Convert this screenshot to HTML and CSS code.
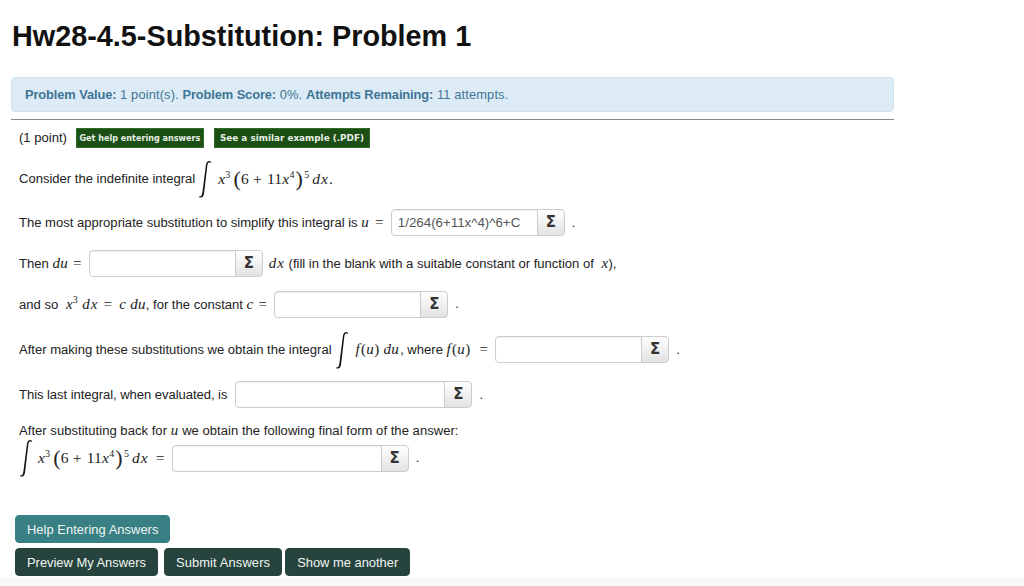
FILE: index.html
```html
<!DOCTYPE html>
<html lang="en">
<head>
<meta charset="utf-8">
<title>Hw28-4.5-Substitution: Problem 1</title>
<link rel="stylesheet" href="styles.css">
</head>
<body>
<main class="page">
  <h1 class="title">Hw28-4.5-Substitution: Problem 1</h1>
  <div class="alert"><b>Problem Value:</b> 1 point(s). <b>Problem Score:</b> 0%. <b>Attempts Remaining:</b> 11 attempts.</div>
  <section class="problem">
    <div class="row r-head">
      <span>(1 point)</span>
      <a class="tag tag-small">Get help entering answers</a>
      <a class="tag">See a similar example (.PDF)</a>
    </div>
    <div class="row r-int1">
      <span>Consider the indefinite integral</span>
      <svg class="integral" viewBox="0 0 14 38"><path d="M13.2 2.4C12.4.9 9.2-.2 8 4.6L4.4 32.6C4 35.4 3.2 37 1.2 36.2L.9 36.9C3.6 38.6 5.6 37 6.1 33L9.2 6.4C9.7 2.2 11 1.4 12.9 2.9Z" fill="#111"/></svg>
      <span class="math m-int"><i>x</i><sup>3</sup><span class="paren p-open">(</span>6<span class="plus">+</span>11<i>x</i><sup class="sup4">4</sup><span class="paren">)</span><sup class="sup5">5</sup><i class="wide">dx</i>.</span>
    </div>
    <div class="row r-sub">
      <span>The most appropriate substitution to simplify this integral is <i class="math">u</i><span class="math rel">=</span></span>
      <span class="answer w146"><span class="field f-filled">1/264(6+11x^4)^6+C</span><span class="sigma">Σ</span></span>
      <span class="dot">.</span>
    </div>
    <div class="row r-du">
      <span>Then <i class="math">du</i><span class="math rel">=</span></span>
      <span class="answer w146"><span class="field"></span><span class="sigma">Σ</span></span>
      <span class="after"><i class="math wide">dx</i> (fill in the blank with a suitable constant or function of <i class="math">&nbsp;x</i>),</span>
    </div>
    <div class="row r-c">
      <span>and so <span class="math">&nbsp;<i>x</i><sup>3</sup> <i class="wide">dx</i><span class="rel rel-both">=</span><i>c du</i></span>, for the constant <i class="math">c</i><span class="math rel">=</span></span>
      <span class="answer w146"><span class="field"></span><span class="sigma">Σ</span></span>
      <span class="dot">.</span>
    </div>
    <div class="row r-fu">
      <span>After making these substitutions we obtain the integral</span>
      <svg class="integral" viewBox="0 0 14 38"><path d="M13.2 2.4C12.4.9 9.2-.2 8 4.6L4.4 32.6C4 35.4 3.2 37 1.2 36.2L.9 36.9C3.6 38.6 5.6 37 6.1 33L9.2 6.4C9.7 2.2 11 1.4 12.9 2.9Z" fill="#111"/></svg>
      <span class="m-fu"><span class="math"><i class="f">f</i>(<i>u</i>) <i>du</i></span><span class="comma">,</span> where <span class="math"><i class="f">f</i>(<i>u</i>)<span class="rel">=</span></span></span>
      <span class="answer w146"><span class="field"></span><span class="sigma">Σ</span></span>
      <span class="dot">.</span>
    </div>
    <div class="row r-last">
      <span>This last integral, when evaluated, is</span>
      <span class="answer w209"><span class="field"></span><span class="sigma">Σ</span></span>
      <span class="dot">.</span>
    </div>
    <div class="row r-back">
      <span>After substituting back for <i class="math">u</i> we obtain the following final form of the answer:</span>
    </div>
    <div class="row r-final">
      <svg class="integral" viewBox="0 0 14 38"><path d="M13.2 2.4C12.4.9 9.2-.2 8 4.6L4.4 32.6C4 35.4 3.2 37 1.2 36.2L.9 36.9C3.6 38.6 5.6 37 6.1 33L9.2 6.4C9.7 2.2 11 1.4 12.9 2.9Z" fill="#111"/></svg>
      <span class="math m-int"><i>x</i><sup>3</sup><span class="paren p-open">(</span>6<span class="plus">+</span>11<i>x</i><sup class="sup4">4</sup><span class="paren">)</span><sup class="sup5">5</sup><i class="wide">dx</i><span class="rel">=</span></span>
      <span class="answer w209"><span class="field"></span><span class="sigma">Σ</span></span>
      <span class="dot">.</span>
    </div>
  </section>
  <div class="actions a-help">
    <button class="btn btn-help">Help Entering Answers</button>
  </div>
  <div class="actions a-main">
    <button class="btn">Preview My Answers</button>
    <button class="btn b-submit">Submit Answers</button>
    <button class="btn">Show me another</button>
  </div>
</main>
<div class="strip"></div>
</body>
</html>
```
FILE: styles.css
```css
html, body { margin: 0; padding: 0; }
body {
  width: 1024px;
  height: 586px;
  overflow: hidden;
  background: #fff;
  color: #222;
  font-family: "Liberation Sans", Arial, sans-serif;
  font-size: 13.05px;
  line-height: 18px;
  position: relative;
}
.page { padding: 0 130px 0 11px; }
.title {
  margin: 0;
  padding: 18px 0 0 1px;
  height: 77px;
  box-sizing: border-box;
  font-size: 28.8px;
  line-height: 36px;
  font-weight: 700;
  color: #111;
}
.alert {
  height: 35px;
  box-sizing: border-box;
  padding: 8px 13px;
  background: #dcebf5;
  border: 1px solid #cfe2ee;
  border-radius: 4px;
  color: #3f7596;
  font-size: 12.85px;
  letter-spacing: .14px;
}
.alert b { letter-spacing: -.1px; }
.problem {
  margin-top: 7px;
  border-top: 1px solid #8a8a8a;
  padding-left: 8px;
}
.row { display: flex; align-items: center; white-space: pre-wrap; }
.math { font-family: "Liberation Serif", "Times New Roman", serif; font-size: 15px; letter-spacing: .3px; }
sup { font-size: 10px; line-height: 0; }
.m-int { font-size: 15.5px; margin-left: 6px; letter-spacing: .2px; }
.paren { font-size: 22px; line-height: 0; vertical-align: -2px; font-weight: 400; }
.p-open { margin-left: 3px; }
.plus { margin: 0 5px 0 4px; }
.sup4 { margin-right: 1px; }
.sup5 { margin: 0 3px 0 1px; }
.wide { letter-spacing: 1px; }
.f { margin-right: 1px; }
.rel { margin-left: 5px; }
.r-sub .rel { margin-left: 6px; }
.r-fu .rel { margin-left: 9px; }
.r-final .rel { margin-left: 7px; }
.rel-both { margin-right: 7px; }
.comma { margin-left: 1px; }
.integral { width: 14px; height: 38px; margin-left: 3px; flex: none; }
.r-head { height: 35px; }
.tag {
  box-sizing: border-box;
  height: 20px;
  background: #1b4f14;
  border: 1px solid #2f6e27;
  color: #e8f0e6;
  font-family: "DejaVu Sans", sans-serif;
  font-weight: 700;
  font-size: 8.85px;
  line-height: 18px;
  padding: 0 5px;
}
.tag-small { font-size: 8.1px; margin-left: 9px; margin-right: 10px; padding: 0 2.5px; white-space: nowrap; }
.r-int1 { height: 48px; }
.r-sub { height: 39px; }
.r-du { height: 43px; }
.r-c { height: 38px; }
.r-fu { height: 53px; }
.r-last { height: 37px; letter-spacing: -.05px; }
.r-last .answer { margin-left: 8px; }
.r-last .field { width: 209px; }
.r-back { height: 35px; letter-spacing: .03px; }
.r-final { height: 20px; }
.r-final .integral { margin-left: 0; }
.r-final .m-int { margin-left: 5px; }
.answer {
  display: inline-flex;
  height: 27px;
  margin-left: 7px;
  flex: none;
}
.w146 .field { width: 147px; }
.w209 .field { width: 210px; }
.field {
  box-sizing: border-box;
  height: 27px;
  border: 1px solid #ccc;
  border-radius: 4px 0 0 4px;
  box-shadow: inset 0 1px 1px rgba(0,0,0,.075);
  padding: 4px 6px;
  color: #555;
  font-size: 13.3px;
  background: #fff;
}
.sigma {
  box-sizing: border-box;
  width: 28px;
  height: 27px;
  margin-left: -1px;
  border: 1px solid #ccc;
  border-radius: 0 4px 4px 0;
  background: linear-gradient(#fff, #e2e2e2);
  text-align: center;
  font-weight: 700;
  font-size: 15px;
  line-height: 25px;
  font-family: "DejaVu Sans", sans-serif;
  color: #333;
}
.dot { margin-left: 7px; }
.after { margin-left: 6px; }
.m-fu { margin-left: 7px; }
.actions { display: flex; gap: 3px; padding-left: 4px; }
.a-help { margin-top: 47px; }
.a-main { margin-top: 5px; }
.btn {
  height: 28px;
  box-sizing: border-box;
  border: 1px solid #26443d;
  border-radius: 4px;
  background: #26443d;
  color: #f0f4f2;
  font-family: "Liberation Sans", Arial, sans-serif;
  font-size: 12.9px;
  padding: 0 11px;
}
.btn-help { background: #388084; border-color: #388084; letter-spacing: .05px; }
.b-submit { margin-left: 3px; letter-spacing: .13px; }
.strip { position: absolute; left: 0; right: 0; bottom: 0; height: 9px; background: #f8f8f8; z-index: -1; }
```
